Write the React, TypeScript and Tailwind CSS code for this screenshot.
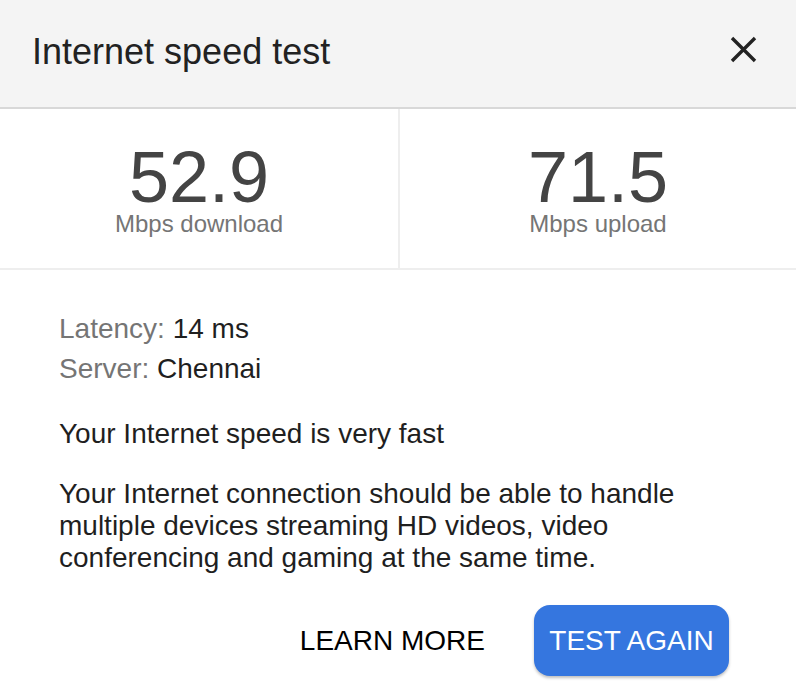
import * as React from "react";

const stats = [
    { value: "52.9", label: "Mbps download" },
    { value: "71.5", label: "Mbps upload" },
];

function CloseIcon() {
    return (
        <svg width="27" height="27" viewBox="0 0 27 27" fill="none">
            <path d="M2 2 L25 25 M25 2 L2 25" stroke="#222" strokeWidth="3.4" />
        </svg>
    );
}

export default function App() {
    return (
        <div className="w-[796px] h-[698px] bg-white font-['Liberation_Sans',Arial,sans-serif] overflow-hidden">
            {/* Header */}
            <div className="h-[109px] flex items-start justify-between pl-[32px] pr-[39px] pt-[34px] bg-[#f4f4f4] border-b-2 border-[#d8d8d8]">
                <h1 className="text-[36px] leading-[36px] text-[#222]">Internet speed test</h1>
                <button className="mt-[2px]">
                    <CloseIcon />
                </button>
            </div>

            {/* Stats */}
            <div className="grid grid-cols-[400px_1fr] border-b-2 border-[#eeeeee]">
                {stats.map((s, i) => (
                    <div
                        key={s.label}
                        className={`flex flex-col items-center pt-[33px] pb-[32px] ${i === 0 ? "border-r-2 border-[#eeeeee]" : ""}`}
                    >
                        <div className="text-[72px] leading-[70px] text-[#444]">{s.value}</div>
                        <div className="text-[24px] leading-[24px] text-[#757575]">{s.label}</div>
                    </div>
                ))}
            </div>

            {/* Details */}
            <div className="pl-[59px] pr-[59px] pt-[39px]">
                <div className="text-[28px] leading-[40px] text-[#1f1f1f]">
                    <div>
                        <span className="text-[#757575]">Latency: </span>14 ms
                    </div>
                    <div>
                        <span className="text-[#757575]">Server: </span>Chennai
                    </div>
                </div>
                <p className="mt-[29px] text-[28px] leading-[32px] text-[#1f1f1f]">Your Internet speed is very fast</p>
                <p className="mt-[28px] text-[28px] leading-[32px] text-[#1f1f1f]">
                    Your Internet connection should be able to handle multiple devices streaming HD videos, video
                    conferencing and gaming at the same time.
                </p>
            </div>

            {/* Actions */}
            <div className="flex items-center justify-end gap-[49px] pr-[67px] mt-[31px]">
                <button className="text-[28px] leading-[32px] text-black">LEARN MORE</button>
                <button className="w-[195px] h-[71px] flex items-center justify-center rounded-[16px] bg-[#3576df] text-white text-[28px] leading-[32px] shadow-[0_2px_3px_rgba(0,0,0,0.25)]">
                    TEST AGAIN
                </button>
            </div>
        </div>
    );
}
